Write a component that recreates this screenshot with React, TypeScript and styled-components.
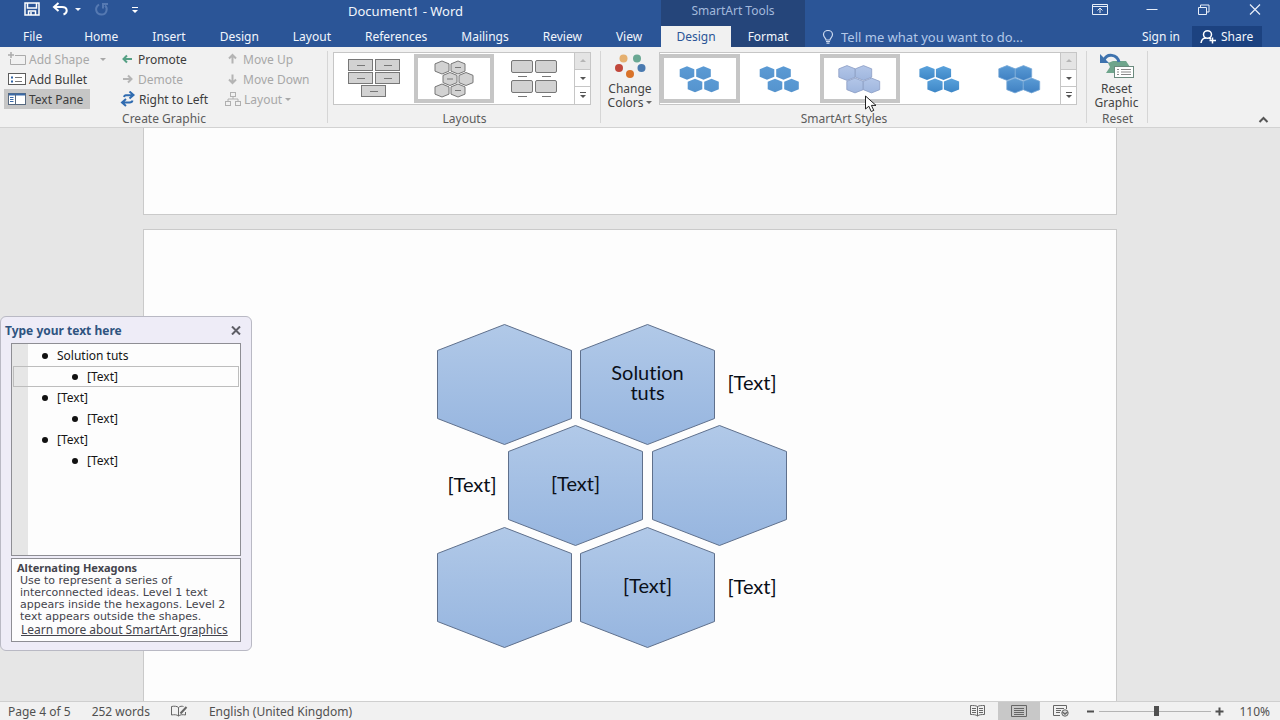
import React from 'react';
import styled, { createGlobalStyle, css } from 'styled-components';

const ui = '"Noto Sans", "Open Sans", sans-serif';

const GlobalStyle = createGlobalStyle`
  *, *::before, *::after { box-sizing: border-box; }
  body { margin: 0; font-family: ${ui}; font-size: 12px; color: #444; overflow: hidden; }
  button, input { font: inherit; color: inherit; margin: 0; padding: 0; border: 0; background: none; }
  button { white-space: nowrap; }
  svg { display: block; flex: none; }
`;

const Shell = styled.div`
  display: flex;
  flex-direction: column;
  height: 100vh;
  background: #e6e6e6;
`;

/* ---------- header ---------- */

const Header = styled.header`
  display: flex;
  height: 47px;
  flex: none;
  background: #2b5597;
  color: #f2f6fc;
`;

const MainSide = styled.div`
  flex: none;
  width: 661px;
  display: flex;
  flex-direction: column;
`;

const TitleRow = styled.div`
  display: flex;
  align-items: center;
  height: 26px;
  padding-bottom: 4px;
`;

const QuickAccess = styled.div`
  display: flex;
  align-items: center;
  gap: 12px;
  width: 348px;
  padding: 0 0 4px 24px;
`;

const IconButton = styled.button<{ $dim?: boolean }>`
  display: flex;
  align-items: center;
  gap: 5px;
  opacity: ${(p) => (p.$dim ? 0.3 : 1)};
`;

const DocTitle = styled.h1`
  margin: 0;
  font-size: 13px;
  line-height: 20px;
  font-weight: 400;
`;

const TabRow = styled.nav`
  display: flex;
  height: 21px;
`;

const Tab = styled.button<{ $active?: boolean; $file?: boolean }>`
  height: 21px;
  line-height: 20px;
  padding: 0 17px;
  ${(p) => p.$file && css`padding: 0 25px 0 23px;`}
  ${(p) => p.$active && css`background: #f1f1f1; color: #2b5597;`}
`;

const ContextGroup = styled.div`
  flex: none;
  width: 144px;
  background: #25457a;
`;

const ContextTitle = styled.div`
  height: 26px;
  line-height: 22px;
  text-align: center;
  color: #a3b9dc;
`;

const ContextTabs = styled.div`
  display: grid;
  grid-template-columns: 70px 74px;
  ${Tab} { padding: 0; }
`;

const AccountSide = styled.div`
  flex: 1;
  display: flex;
  flex-direction: column;
`;

const WindowButtons = styled.div`
  display: flex;
  justify-content: flex-end;
  align-items: center;
  height: 26px;
  padding: 0 18px 8px 0;
  gap: 36px;
`;

const AccountRow = styled.div`
  display: flex;
  align-items: center;
  height: 21px;
  padding: 0 18px 0 17px;
`;

const TellMe = styled.label`
  flex: 1;
  display: flex;
  align-items: center;
  gap: 7px;
  font-size: 13px;
  color: #b3c8e8;
  input { flex: 1; height: 20px; outline: 0; }
  input::placeholder { color: #b3c8e8; opacity: 1; }
`;

const SignIn = styled.button`
  margin-right: 12px;
`;

const Share = styled.button`
  display: flex;
  align-items: center;
  gap: 4px;
  height: 21px;
  width: 70px;
  padding-left: 8px;
  background: #1c4280;
`;

/* ---------- ribbon ---------- */

const Ribbon = styled.div`
  display: flex;
  flex: none;
  height: 81px;
  background: #f1f1f1;
  border-bottom: 1px solid #d2d2d2;
`;

const Group = styled.section<{ $w: number }>`
  flex: none;
  width: ${(p) => p.$w}px;
  display: flex;
  flex-direction: column;
  position: relative;
  padding-top: 2px;
  &::after {
    content: '';
    position: absolute;
    right: 0;
    top: 4px;
    bottom: 4px;
    width: 1px;
    background: #d6d6d6;
  }
`;

const GroupBody = styled.div<{ $inset?: boolean }>`
  flex: 1;
  display: flex;
  align-items: flex-start;
  padding-left: ${(p) => (p.$inset ? 5 : 0)}px;
`;

const GroupLabel = styled.div`
  height: 17px;
  line-height: 17px;
  text-align: center;
  color: #5c5c5c;
`;

const Commands = styled.div`
  display: grid;
  grid-template-columns: 112px 105px 105px;
  grid-template-rows: repeat(3, 20px);
  grid-auto-flow: column;
  padding-left: 4px;
  justify-items: start;
`;

const Command = styled.button<{ $disabled?: boolean; $pressed?: boolean }>`
  display: flex;
  align-items: center;
  gap: 3px;
  height: 20px;
  padding: 0 7px 0 4px;
  color: ${(p) => (p.$disabled ? '#a8a8a8' : '#3c3c3c')};
  background: ${(p) => (p.$pressed ? '#c6c6c6' : 'transparent')};
`;

const DropMark = styled.span<{ $far?: boolean }>`
  margin-left: ${(p) => (p.$far ? 8 : 0)}px;
  border: 3px solid transparent;
  border-top-color: currentColor;
  border-bottom: 0;
`;

const Gallery = styled.div`
  display: flex;
  height: 53px;
  margin-top: 3px;
  border: 1px solid #c6c6c6;
  background: #fff;
`;

const GalleryItem = styled.button<{ $on?: boolean }>`
  display: flex;
  align-items: center;
  justify-content: center;
  width: 80px;
  height: 49px;
  margin-top: 1px;
  border: 4px solid ${(p) => (p.$on ? '#c6c6c6' : 'transparent')};
`;

const GalleryScroll = styled.div`
  display: grid;
  grid-template-rows: repeat(3, 17px);
  width: 16px;
  border-left: 1px solid #c6c6c6;
  color: #555;
  button {
    display: flex;
    align-items: center;
    justify-content: center;
    border-bottom: 1px solid #c6c6c6;
  }
  button:first-child { background: #e4e4e4; color: #b5b5b5; }
  button:last-child { border-bottom: 0; }
`;

const BigButton = styled.button<{ $w: number }>`
  display: flex;
  flex-direction: column;
  align-items: center;
  width: ${(p) => p.$w}px;
  padding-top: 4px;
  color: #444;
  line-height: 14px;
  svg { margin-bottom: 3px; }
`;

const InlineMark = styled.span`
  display: inline-block;
  margin-left: 3px;
  vertical-align: 3px;
  border: 3px solid transparent;
  border-top-color: #666;
  border-bottom: 0;
`;

const RibbonEnd = styled.div`
  flex: 1;
  display: flex;
  justify-content: flex-end;
  align-items: flex-end;
  padding: 0 11px 3px 0;
`;

const Pointer = styled.svg`
  position: absolute;
  left: 263px;
  top: 48px;
  pointer-events: none;
`;

/* ---------- document ---------- */

const Workspace = styled.main`
  flex: 1;
  min-height: 0;
  position: relative;
  display: flex;
  flex-direction: column;
  align-items: center;
  gap: 14px;
  padding-right: 20px;
  overflow: hidden;
`;

const Sheet = styled.article<{ $tail?: boolean }>`
  width: 974px;
  max-width: 100%;
  background: #fdfdfd;
  border: 1px solid #cacaca;
  ${(p) =>
    p.$tail
      ? css`flex: none; height: 87px; border-top: 0;`
      : css`flex: 1; border-bottom: 0; padding: 94px 0 0 293px;`}
`;

const Diagram = styled.div`
  position: relative;
  width: 350px;
  height: 324px;
  color: #0a0f18;
  font: 20px/20px Lato, "Noto Sans", sans-serif;
  font-variant-ligatures: none;
`;

const Node = styled.div<{ $x: number; $y: number }>`
  position: absolute;
  left: ${(p) => p.$x}px;
  top: ${(p) => p.$y}px;
  width: 135px;
  height: 121px;
  display: flex;
  align-items: center;
  justify-content: center;
  padding-bottom: 5px;
  text-align: center;
  svg { position: absolute; inset: 0; }
  span { position: relative; width: 90px; }
`;

const Caption = styled.span<{ $x: number; $y: number }>`
  position: absolute;
  left: ${(p) => p.$x}px;
  top: ${(p) => p.$y}px;
  width: 60px;
  text-align: center;
`;

/* ---------- text pane ---------- */

const Pane = styled.aside`
  position: absolute;
  left: 0;
  top: 188px;
  width: 252px;
  padding: 0 10px 8px;
  background: #eeecf7;
  border: 1px solid #b9b9c4;
  border-radius: 6px;
`;

const PaneHead = styled.div`
  display: flex;
  align-items: center;
  justify-content: space-between;
  height: 26px;
  margin-left: -6px;
  h2 { margin: 0; font-size: 12px; font-weight: 700; color: #2f5480; }
`;

const Outline = styled.ul`
  margin: 0 0 2px;
  padding: 1px;
  list-style: none;
  height: 213px;
  border: 1px solid #8e8e94;
  background: linear-gradient(to right, #e6e6e6 16px, #fdfdfd 16px);
  color: #151515;
`;

const OutlineItem = styled.li<{ $level: number; $on?: boolean }>`
  display: flex;
  align-items: center;
  gap: 9px;
  height: 21px;
  padding-left: ${(p) => (p.$level === 1 ? 28 : 58)}px;
  border: 1px solid ${(p) => (p.$on ? '#bdbdbd' : 'transparent')};
  &::before {
    content: '';
    width: 6px;
    height: 6px;
    border-radius: 50%;
    background: #111;
  }
`;

const About = styled.div`
  height: 84px;
  padding: 2px 5px 0;
  border: 1px solid #8e8e94;
  background: #fdfdfd;
  color: #44444c;
  h3 { margin: 0; font-size: 11px; line-height: 14px; font-weight: 700; }
  p { margin: 0 0 0 3px; font: 11px/12px "DejaVu Sans", sans-serif; white-space: nowrap; }
  a { display: block; margin-left: 4px; font-size: 12px; line-height: 14px; color: inherit; white-space: nowrap; }
`;

/* ---------- status bar ---------- */

const StatusBar = styled.footer`
  flex: none;
  display: flex;
  align-items: center;
  height: 19px;
  padding: 0 10px 0 8px;
  border-top: 1px solid #cfcfcf;
  background: #f1f1f1;
  color: #505050;
`;

const StatusText = styled.div`
  display: flex;
  flex: 1;
  align-items: center;
  gap: 21px;
`;

const ViewButton = styled.button<{ $on?: boolean }>`
  display: flex;
  align-items: center;
  justify-content: center;
  width: 42px;
  height: 18px;
  background: ${(p) => (p.$on ? '#c8c8c8' : 'transparent')};
`;

const ZoomArea = styled.div`
  display: flex;
  align-items: center;
  gap: 4px;
  margin-left: 4px;
  button { display: flex; }
  output { width: 32px; margin-left: 10px; text-align: right; }
`;

const ZoomSlider = styled.input`
  appearance: none;
  width: 112px;
  height: 12px;
  background: linear-gradient(#b4b4b4, #b4b4b4) center / 100% 1px no-repeat;
  &::-webkit-slider-thumb {
    appearance: none;
    width: 5px;
    height: 10px;
    background: #505050;
  }
`;

/* ---------- drawings ---------- */

const Arrow = ({ dir, color }: { dir: 'left' | 'right' | 'up' | 'down'; color: string }) => {
  const turn = { left: 0, up: 90, right: 180, down: 270 }[dir];
  return (
    <svg width="15" height="14" viewBox="0 0 15 14" fill="none" stroke={color} strokeWidth="2">
      <path d="M12 7H3.500M7 3.500L3.500 7L7 10.500" transform={`rotate(${turn} 7.5 7)`} />
    </svg>
  );
};

const AddShapeIcon = () => (
  <svg width="18" height="14" viewBox="0 0 18 14" fill="none" stroke="#ababab">
    <path d="M7 3.500H17.500V12.500H2.500V7" />
    <path d="M3 0V6M0 3H6" strokeWidth="1.500" />
  </svg>
);
const BulletIcon = () => (
  <svg width="18" height="14" viewBox="0 0 18 14" fill="#fff" stroke="#5c5c5c">
    <rect x="0.500" y="1.500" width="17" height="11" />
    <path d="M7 5.500H14M7 9.500H14" stroke="#777" />
    <path d="M3 5.500H5M3 9.500H5" stroke="#2f62a3" strokeWidth="2" />
  </svg>
);
const PaneIcon = () => (
  <svg width="18" height="14" viewBox="0 0 18 14">
    <rect x="0.500" y="1.500" width="17" height="11" fill="#fff" stroke="#56687f" />
    <path d="M1 2.500H17" stroke="#3b6aa8" strokeWidth="2" />
    <path d="M7.500 2V12" stroke="#56687f" />
    <path d="M2 5.500H5.500M2 7.500H5.500M2 9.500H5.500" stroke="#3b6aa8" />
  </svg>
);
const SwapIcon = () => (
  <svg width="16" height="16" viewBox="0 0 16 16" fill="none" stroke="#2f6bb0" strokeWidth="2">
    <path d="M4 6C4.500 3.800 6 4 13 4M9.500 0.500L13.500 4L9.500 7.500" />
    <path d="M12.500 9.500C12 12 10 11.500 3 11.500M6 8L2 11.500L6 15" />
  </svg>
);
const OrgIcon = () => (
  <svg width="16" height="14" viewBox="0 0 16 14" fill="none" stroke="#b0b0b0">
    <rect x="5.500" y="0.500" width="5" height="4" />
    <rect x="0.500" y="9.500" width="5" height="4" />
    <rect x="10.500" y="9.500" width="5" height="4" />
    <path d="M8 5V7M3 9V7H13V9" />
  </svg>
);

const hexPoints = (cx: number, cy: number, rx: number, ry: number) =>
  [[0, -1], [1, -0.56], [1, 0.56], [0, 1], [-1, 0.56], [-1, -0.56]]
    .map(([x, y]) => `${cx + x * rx},${cy + y * ry}`)
    .join(' ');

const BlocksThumb = () => (
  <svg width="52" height="40" viewBox="0 0 52 40" fill="#d2d2d2" stroke="#777">
    {[[0, 0], [27, 0], [0, 13], [27, 13], [13, 26]].map(([x, y]) => (
      <g key={`${x}-${y}`}>
        <rect x={x + 0.5} y={y + 0.5} width="24" height="11" />
        <path d={`M${x + 9} ${y + 6.5}h8`} />
      </g>
    ))}
  </svg>
);
const HexThumb = () => (
  <svg width="40" height="38" viewBox="0 0 40 38" fill="#d2d2d2" stroke="#777">
    {[[8, 7.5, 0], [24, 7.5, 1], [16, 19, 1], [32, 19, 0], [8, 30.5, 0], [24, 30.5, 1]].map(([x, y, dash]) => (
      <g key={`${x}-${y}`}>
        <polygon points={hexPoints(x, y, 7, 6.5)} />
        {dash === 1 && <path d={`M${x - 3} ${y}h6`} />}
      </g>
    ))}
  </svg>
);
const PicturesThumb = () => (
  <svg width="46" height="38" viewBox="0 0 46 38" fill="#d2d2d2" stroke="#777">
    {[[0, 0], [24, 0], [0, 20], [24, 20]].map(([x, y]) => (
      <g key={`${x}-${y}`}>
        <rect x={x + 0.5} y={y + 0.5} width="21" height="12" rx="1.500" />
        <path d={`M${x + 7} ${y + 16.5}h9`} />
      </g>
    ))}
  </svg>
);

type StyleLook = { top: string; bottom: string; line: string; rx: number; ry: number };
const styleLooks: StyleLook[] = [
  { top: '#5b9bd5', bottom: '#5593cd', line: 'none', rx: 7.3, ry: 6.7 },
  { top: '#5b9bd5', bottom: '#5593cd', line: 'none', rx: 7.3, ry: 6.7 },
  { top: '#b3c6e8', bottom: '#9fb6de', line: '#8b9dc4', rx: 8.2, ry: 7.4 },
  { top: '#5aa2dc', bottom: '#3d86c6', line: 'none', rx: 7.6, ry: 7 },
  { top: '#5a9bd5', bottom: '#3f80c2', line: '#79a9d8', rx: 8.2, ry: 7.4 },
];

const StyleThumb = ({ look, id }: { look: StyleLook; id: string }) => (
  <svg width="44" height="30" viewBox="0 0 44 30">
    <defs>
      <linearGradient id={id} x1="0" y1="0" x2="0" y2="1">
        <stop offset="0" stopColor={look.top} />
        <stop offset="1" stopColor={look.bottom} />
      </linearGradient>
    </defs>
    {[[9, 9], [25.5, 9], [17, 21.5], [33.5, 21.5]].map(([x, y]) => (
      <polygon
        key={x}
        points={hexPoints(x, y, look.rx, look.ry)}
        fill={`url(#${id})`}
        stroke={look.line}
        strokeWidth="0.8"
      />
    ))}
  </svg>
);

const ColorDots = () => (
  <svg width="32" height="26" viewBox="0 0 32 26">
    <circle cx="9.500" cy="5.500" r="4" fill="#e5b070" />
    <circle cx="23" cy="5.500" r="4" fill="#6aa893" />
    <circle cx="5" cy="15" r="4" fill="#c1483c" />
    <circle cx="27.500" cy="15" r="4" fill="#4a7ab0" />
    <circle cx="16" cy="21" r="4" fill="#d9732a" />
  </svg>
);
const ResetIcon = () => (
  <svg width="36" height="26" viewBox="0 0 36 26">
    <path d="M14 8H27L31 14H15V20H7L11 14L9 10Z" fill="#6fa58c" />
    <path d="M20 9C18 1 8 0 5 7" fill="none" stroke="#3f73ae" strokeWidth="3" />
    <path d="M1 1V10H10Z" fill="#3f73ae" />
    <rect x="15.500" y="13.500" width="19" height="11" fill="#fff" stroke="#6b8a7e" />
    <path d="M18 16.500h2M18 19h2M18 21.500h2M22 16.500h10M22 19h10M22 21.500h10" stroke="#888" />
  </svg>
);

const Triangle = ({ up, bar }: { up?: boolean; bar?: boolean }) => (
  <svg width="8" height="8" viewBox="0 0 8 8" fill="currentColor">
    {bar && <rect x="1" y="0" width="6" height="1" />}
    <path d={up ? 'M1 5L4 2L7 5Z' : 'M1 3L4 6L7 3Z'} />
  </svg>
);

const Scroller = () => (
  <GalleryScroll>
    <button aria-label="Scroll up"><Triangle up /></button>
    <button aria-label="Scroll down"><Triangle /></button>
    <button aria-label="More"><Triangle bar /></button>
  </GalleryScroll>
);

const HexShape = () => (
  <svg width="135" height="121" viewBox="0 0 135 121">
    <defs>
      <linearGradient id="node" x1="0" y1="0" x2="0" y2="1">
        <stop offset="0" stopColor="#b1c9e8" />
        <stop offset="1" stopColor="#96b5df" />
      </linearGradient>
    </defs>
    <polygon points="67.500,0.500 134.500,26.500 134.500,94.500 67.500,120.500 0.500,94.500 0.500,26.500" fill="url(#node)" stroke="#5f708c" />
  </svg>
);

const nodes = [
  { x: 0, y: 0, text: '' },
  { x: 143, y: 0, text: 'Solution tuts' },
  { x: 71, y: 101, text: '[Text]' },
  { x: 215, y: 101, text: '' },
  { x: 0, y: 203, text: '' },
  { x: 143, y: 203, text: '[Text]' },
];
const captions = [[285, 48], [5, 150], [285, 252]];

const outline = [
  { text: 'Solution tuts', level: 1 },
  { text: '[Text]', level: 2, on: true },
  { text: '[Text]', level: 1 },
  { text: '[Text]', level: 2 },
  { text: '[Text]', level: 1 },
  { text: '[Text]', level: 2 },
];

const tabs = ['Home', 'Insert', 'Design', 'Layout', 'References', 'Mailings', 'Review', 'View'];

export default function App() {
  return (
    <Shell>
      <GlobalStyle />
      <Header>
        <MainSide>
          <TitleRow>
            <QuickAccess>
              <IconButton aria-label="Save">
                <svg width="16" height="14" viewBox="0 0 16 14" fill="none" stroke="#fff" strokeWidth="1.500">
                  <path d="M1 1H15V13H1ZM3.500 1V6H12.500V1M4.500 13V9H11.500V13M7 10V13" />
                </svg>
              </IconButton>
              <IconButton aria-label="Undo">
                <svg width="17" height="14" viewBox="0 0 17 14" fill="none" stroke="#fff" strokeWidth="2">
                  <path d="M6.500 1L2 5L6.500 9M2 5H10C16 5 16 11 11.500 12.500" />
                </svg>
                <Triangle />
              </IconButton>
              <IconButton aria-label="Repeat" $dim>
                <svg width="16" height="14" viewBox="0 0 16 14" fill="none" stroke="#b8cdf0" strokeWidth="2">
                  <path d="M5 2.500C0 6 2 12.500 7.500 12.500C13 12.500 14 6 11 3.500M9 6.500V2H14" />
                </svg>
              </IconButton>
              <IconButton aria-label="Customize Quick Access Toolbar">
                <svg width="24" height="8" viewBox="0 0 24 8" fill="#fff">
                  <path d="M10 2h6v1h-6zM10 5h6l-3 3z" />
                </svg>
              </IconButton>
            </QuickAccess>
            <DocTitle>Document1 - Word</DocTitle>
          </TitleRow>
          <TabRow>
            <Tab $file>File</Tab>
            {tabs.map((t) => <Tab key={t}>{t}</Tab>)}
          </TabRow>
        </MainSide>
        <ContextGroup>
          <ContextTitle>SmartArt Tools</ContextTitle>
          <ContextTabs>
            <Tab $active>Design</Tab>
            <Tab>Format</Tab>
          </ContextTabs>
        </ContextGroup>
        <AccountSide>
          <WindowButtons>
            <IconButton aria-label="Ribbon Display Options">
              <svg width="16" height="11" viewBox="0 0 16 11" fill="none" stroke="#e8eef8">
                <path d="M0.500 0.500H15.500V10.500H0.500ZM0.500 2.500H15.500M8 9V4.500M5.500 6.500L8 4L10.500 6.500" />
              </svg>
            </IconButton>
            <IconButton aria-label="Minimize">
              <svg width="16" height="11" viewBox="0 0 16 11" stroke="#e8eef8"><path d="M2.500 5.500H13.500" /></svg>
            </IconButton>
            <IconButton aria-label="Restore">
              <svg width="16" height="11" viewBox="0 0 16 11" fill="none" stroke="#e8eef8">
                <path d="M2.500 3.500H10.500V10.500H2.500ZM4.500 3V1H13V8H11" />
              </svg>
            </IconButton>
            <IconButton aria-label="Close">
              <svg width="14" height="11" viewBox="0 0 14 11" stroke="#e8eef8" strokeWidth="1.200"><path d="M2 0.500L12 10.500M12 0.500L2 10.500" /></svg>
            </IconButton>
          </WindowButtons>
          <AccountRow>
            <TellMe>
              <svg width="12" height="14" viewBox="0 0 12 14" fill="none" stroke="#cddaf0" strokeWidth="1.200">
                <path d="M4 10C4 8 1.500 7.500 1.500 4.500A4.500 4 0 0 1 10.500 4.500C10.500 7.500 8 8 8 10ZM4 11.500H8M4.500 13.200H7.500" />
              </svg>
              <input aria-label="Tell me what you want to do" placeholder="Tell me what you want to do..." />
            </TellMe>
            <SignIn>Sign in</SignIn>
            <Share>
              <svg width="17" height="14" viewBox="0 0 17 14" fill="none" stroke="#fff" strokeWidth="1.500">
                <ellipse cx="7.500" cy="4.500" rx="4" ry="3.700" />
                <path d="M1 13C1.500 9.500 4 8 6 8M9 8L11 9M12.500 7.500V13.500M9.500 10.500H16" />
              </svg>
              Share
            </Share>
          </AccountRow>
        </AccountSide>
      </Header>

      <Ribbon>
        <Group $w={328}>
          <GroupBody>
            <Commands>
              <Command $disabled><AddShapeIcon />Add Shape<DropMark $far /></Command>
              <Command><BulletIcon />Add Bullet</Command>
              <Command $pressed><PaneIcon />Text Pane</Command>
              <Command><Arrow dir="left" color="#55a084" />Promote</Command>
              <Command $disabled><Arrow dir="right" color="#b4b4b4" />Demote</Command>
              <Command><SwapIcon />Right to Left</Command>
              <Command $disabled><Arrow dir="up" color="#b4b4b4" />Move Up</Command>
              <Command $disabled><Arrow dir="down" color="#b4b4b4" />Move Down</Command>
              <Command $disabled><OrgIcon />Layout<DropMark /></Command>
            </Commands>
          </GroupBody>
          <GroupLabel>Create Graphic</GroupLabel>
        </Group>
        <Group $w={273}>
          <GroupBody $inset>
            <Gallery>
              <GalleryItem aria-label="Block list"><BlocksThumb /></GalleryItem>
              <GalleryItem $on aria-label="Alternating hexagons"><HexThumb /></GalleryItem>
              <GalleryItem aria-label="Picture list"><PicturesThumb /></GalleryItem>
              <Scroller />
            </Gallery>
          </GroupBody>
          <GroupLabel>Layouts</GroupLabel>
        </Group>
        <Group $w={486}>
          <GroupBody>
            <BigButton $w={58}>
              <ColorDots />
              <span>Change</span>
              <span>Colors<InlineMark /></span>
            </BigButton>
            <Gallery>
              {styleLooks.map((look, i) => (
                <GalleryItem key={i} $on={i === 0 || i === 2} aria-label={`Style ${i + 1}`}>
                  <StyleThumb look={look} id={`style-${i}`} />
                </GalleryItem>
              ))}
              <Scroller />
            </Gallery>
          </GroupBody>
          <GroupLabel>SmartArt Styles</GroupLabel>
          <Pointer width="14" height="18" viewBox="0 0 14 18">
            <path d="M1.500 1V14L4.800 11.200L7.200 16.500L9.800 15.400L7.400 10.400H12Z" fill="#fff" stroke="#222" />
          </Pointer>
        </Group>
        <Group $w={61}>
          <GroupBody>
            <BigButton $w={59}>
              <ResetIcon />
              <span>Reset</span>
              <span>Graphic</span>
            </BigButton>
          </GroupBody>
          <GroupLabel>Reset</GroupLabel>
        </Group>
        <RibbonEnd>
          <IconButton aria-label="Collapse the Ribbon">
            <svg width="11" height="8" viewBox="0 0 11 8" fill="none" stroke="#555" strokeWidth="2"><path d="M1.500 6L5.500 2L9.500 6" /></svg>
          </IconButton>
        </RibbonEnd>
      </Ribbon>

      <Workspace>
        <Sheet $tail />
        <Sheet>
          <Diagram>
            {nodes.map((n) => (
              <Node key={`${n.x}-${n.y}`} $x={n.x} $y={n.y}>
                <HexShape />
                {n.text && <span>{n.text}</span>}
              </Node>
            ))}
            {captions.map(([x, y]) => <Caption key={y} $x={x} $y={y}>[Text]</Caption>)}
          </Diagram>
        </Sheet>
        <Pane>
          <PaneHead>
            <h2>Type your text here</h2>
            <IconButton aria-label="Close text pane">
              <svg width="10" height="9" viewBox="0 0 10 9" stroke="#5e5e66" strokeWidth="2"><path d="M1 0.500L9 8.500M9 0.500L1 8.500" /></svg>
            </IconButton>
          </PaneHead>
          <Outline>
            {outline.map((o, i) => <OutlineItem key={i} $level={o.level} $on={o.on}>{o.text}</OutlineItem>)}
          </Outline>
          <About>
            <h3>Alternating Hexagons</h3>
            <p>
              Use to represent a series of<br />
              interconnected ideas. Level 1 text<br />
              appears inside the hexagons. Level 2<br />
              text appears outside the shapes.
            </p>
            <a href="#learn">Learn more about SmartArt graphics</a>
          </About>
        </Pane>
      </Workspace>

      <StatusBar>
        <StatusText>
          <span>Page 4 of 5</span>
          <span>252 words</span>
          <svg width="17" height="12" viewBox="0 0 17 12" fill="none" stroke="#666">
            <path d="M7.500 2.500C6 1 3 1 0.500 1.500V10C3 9.500 6 9.500 7.500 11V2.500C9 1 11 1 12.500 1.500M7.500 11C9 9.500 12 9.500 14.500 10V7" />
            <path d="M9.500 8.500L15.500 2" strokeWidth="2" />
          </svg>
          <span>English (United Kingdom)</span>
        </StatusText>
        <ViewButton aria-label="Read Mode">
          <svg width="15" height="12" viewBox="0 0 15 12" fill="none" stroke="#666">
            <path d="M7.500 1.500C6 0.500 3 0.500 0.500 0.500V9.500C3 9.500 6 9.500 7.500 11C9 9.500 12 9.500 14.500 9.500V0.500C12 0.500 9 0.500 7.500 1.500V11M2 3.500h4M2 5.500h4M2 7.500h4M9 3.500h4M9 5.500h4M9 7.500h4" />
          </svg>
        </ViewButton>
        <ViewButton $on aria-label="Print Layout">
          <svg width="16" height="12" viewBox="0 0 16 12" fill="none" stroke="#666">
            <path d="M0.500 0.500H15.500V11.500H0.500ZM3 3.500H13M3 5.500H13M3 7.500H13M3 9.500H13" />
          </svg>
        </ViewButton>
        <ViewButton aria-label="Web Layout">
          <svg width="16" height="12" viewBox="0 0 16 12" fill="none" stroke="#666">
            <path d="M7 10.500H0.500V0.500H13.500V4M3 3.500H11M3 5.500H8M3 7.500H7" />
            <circle cx="12" cy="8" r="3.200" fill="#ddd" />
            <path d="M9.500 7L12 9L14.500 7" strokeWidth="1.500" />
          </svg>
        </ViewButton>
        <ZoomArea>
          <button aria-label="Zoom out">
            <svg width="9" height="9" viewBox="0 0 9 9" stroke="#505050" strokeWidth="2"><path d="M1 4.500H8" /></svg>
          </button>
          <ZoomSlider type="range" aria-label="Zoom" min={10} max={200} defaultValue={108} />
          <button aria-label="Zoom in">
            <svg width="9" height="9" viewBox="0 0 9 9" stroke="#505050" strokeWidth="2"><path d="M0.500 4.500H8.500M4.500 0.500V8.500" /></svg>
          </button>
          <output>110%</output>
        </ZoomArea>
      </StatusBar>
    </Shell>
  );
}
